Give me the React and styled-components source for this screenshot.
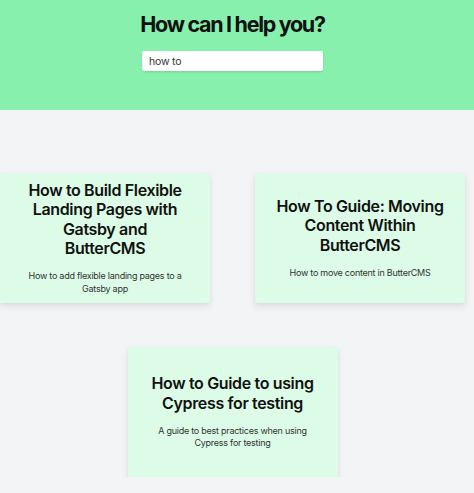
import React from 'react';
import styled, { createGlobalStyle } from 'styled-components';

const GlobalStyle = createGlobalStyle`
	* {
		box-sizing: border-box;
	}
	body {
		margin: 0;
		background: #f3f4f6;
		font-family: Inter, 'Noto Sans', sans-serif;
		color: #111;
	}
`;

const Header = styled.header`
	background: #87f0ad;
	height: 110px;
	.inner {
		width: 465px;
		display: flex;
		flex-direction: column;
		align-items: center;
		padding-top: 10px;
	}
	h1 {
		margin: 0;
		font-size: 21.5px;
		line-height: 28px;
		font-weight: 700;
		letter-spacing: -1.3px;
	}
`;

const SearchInput = styled.input`
	margin-top: 13px;
	width: 181px;
	height: 20px;
	border: none;
	border-radius: 2px;
	background: #fff;
	box-shadow: 0 1px 2px rgba(0, 0, 0, 0.12);
	padding: 0 7px;
	font-family: inherit;
	font-size: 10.5px;
	letter-spacing: -0.2px;
	color: #333;
	outline: none;
`;

const CardList = styled.main`
	width: 465px;
	display: flex;
	flex-wrap: wrap;
	justify-content: center;
	column-gap: 45px;
	row-gap: 44px;
	padding-top: 63px;
`;

const Card = styled.article`
	width: 210px;
	height: 130px;
	background: #dcfce7;
	box-shadow: 0 4px 8px rgba(0, 0, 0, 0.08), 0 1px 3px rgba(0, 0, 0, 0.05);
	display: flex;
	flex-direction: column;
	justify-content: center;
	align-items: center;
	padding: 0 16px;
	text-align: center;
	h2 {
		margin: 0;
		font-size: 16px;
		line-height: 19.4px;
		font-weight: 600;
		letter-spacing: -0.35px;
		color: #111;
		span {
			display: block;
			white-space: nowrap;
		}
	}
	p {
		margin: 11.5px 0 0;
		padding: 0 5px;
		font-size: 9px;
		line-height: 12.6px;
		letter-spacing: -0.25px;
		color: #333;
	}
`;

// title lines kept as in the original layout
const posts = [
	{
		title: ['How to Build Flexible', 'Landing Pages with', 'Gatsby and', 'ButterCMS'],
		summary: 'How to add flexible landing pages to a Gatsby app',
	},
	{
		title: ['How To Guide: Moving', 'Content Within', 'ButterCMS'],
		summary: 'How to move content in ButterCMS',
	},
	{
		title: ['How to Guide to using', 'Cypress for testing'],
		summary: 'A guide to best practices when using Cypress for testing',
	},
];

const App = () => {
	return (
		<>
			<GlobalStyle />
			<Header>
				<div className="inner">
					<h1>How can I help you?</h1>
					<SearchInput defaultValue="how to" />
				</div>
			</Header>
			<CardList>
				{posts.map((post) => (
					<Card key={post.title.join(' ')}>
						<h2>
							{post.title.map((line) => (
								<span key={line}>{line}</span>
							))}
						</h2>
						<p>{post.summary}</p>
					</Card>
				))}
			</CardList>
		</>
	);
};

export default App;
